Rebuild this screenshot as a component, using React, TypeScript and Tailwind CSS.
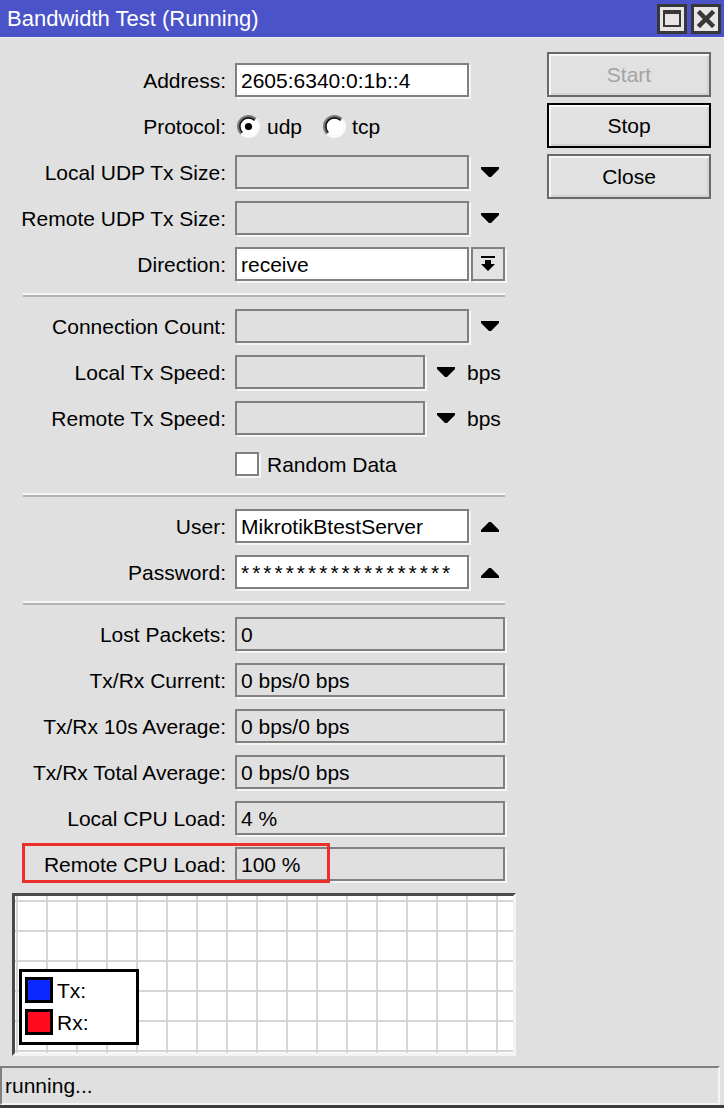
import React from "react";

function DropArrow({ up = false }: { up?: boolean }) {
  return (
    <svg width="18" height="11" viewBox="0 0 18 11" className={up ? "rotate-180" : ""}>
      <polygon points="0,0 18,0 18,2 10,10 8,10 0,2" fill="#000" />
    </svg>
  );
}

function Radio({ checked }: { checked?: boolean }) {
  return (
    <svg width="23" height="23" viewBox="0 0 23 23">
      <circle cx="11.5" cy="11.5" r="10" fill="#fff" />
      <path d="M 4.4 18.6 A 10 10 0 0 1 18.6 4.4" stroke="#7a7a7a" strokeWidth="3" fill="none" />
      <path d="M 5.4 17.6 A 8.6 8.6 0 0 1 17.6 5.4" stroke="#111" strokeWidth="1.6" fill="none" />
      <path d="M 18.6 4.4 A 10 10 0 0 1 4.4 18.6" stroke="#fafafa" strokeWidth="3" fill="none" />
      {checked && <circle cx="11.5" cy="11.5" r="3.6" fill="#000" />}
    </svg>
  );
}

function Label({ text, children }: { text: string; children?: React.ReactNode }) {
  return (
    <div className="relative h-[34px] flex items-center justify-end whitespace-nowrap">
      {text}
      {children}
    </div>
  );
}

function Box({ value = "", className = "" }: { value?: string; className?: string }) {
  return (
    <div
      className={`h-[34px] shrink-0 border-2 border-[#808080] shadow-[2px_2px_0_#f6f6f6] flex items-center pl-[4px] whitespace-nowrap overflow-hidden ${className}`}
    >
      {value}
    </div>
  );
}

function Separator() {
  return <div className="col-span-2 ml-[23px] h-[4px] border-t-2 border-[#f4f4f4] bg-[#b4b4b4]" />;
}

function WinButton({ text, active, disabled }: { text: string; active?: boolean; disabled?: boolean }) {
  return (
    <button
      className={`w-[164px] h-[45px] border-2 bg-[#e1e1e1] shadow-[inset_2px_2px_0_#f7f7f7,inset_-2px_-2px_0_#d2d2d2] flex items-center justify-center ${
        active ? "border-black" : "border-[#6a6a6a]"
      } ${disabled ? "text-[#a3a3a3]" : "text-black"}`}
    >
      {text}
    </button>
  );
}

export default function App() {
  return (
    <div className="w-[724px] h-[1108px] bg-[#e0e0e0] border-b-[3px] border-[#3c3c3c] flex flex-col overflow-hidden font-['Liberation_Sans',Arial,sans-serif] text-[21px] leading-none text-black">
      {/* title bar */}
      <div className="h-[38px] shrink-0 bg-[#4b53c9] border-b border-[#ececec] flex items-center justify-between pl-[7px] pr-[3px]">
        <span className="text-[22px] text-white">Bandwidth Test (Running)</span>
        <div className="flex gap-[4px]">
          <div className="w-[30px] h-[30px] border-[3px] border-[#383838] bg-[#e7e5e7] flex items-center justify-center">
            <div className="w-[18px] h-[17px] border-x-2 border-b-2 border-t-4 border-[#383838]" />
          </div>
          <div className="w-[30px] h-[30px] border-[3px] border-[#383838] bg-[#e7e5e7] flex items-center justify-center">
            <svg width="18" height="18" viewBox="0 0 18 18">
              <path d="M3 3 L15 15 M15 3 L3 15" stroke="#383838" strokeWidth="4.5" strokeLinecap="square" />
            </svg>
          </div>
        </div>
      </div>

      <div className="flex shrink-0">
        {/* form */}
        <div className="pt-[25px] grid grid-cols-[226px_270px] gap-x-[9px] gap-y-[12px]">
          <Label text="Address:" />
          <Box value="2605:6340:0:1b::4" className="w-[234px] bg-white" />

          <Label text="Protocol:" />
          <div className="h-[34px] flex items-center pl-[2px]">
            <Radio checked />
            <span className="ml-[7px]">udp</span>
            <span className="ml-[21px] flex">
              <Radio />
            </span>
            <span className="ml-[6px]">tcp</span>
          </div>

          <Label text="Local UDP Tx Size:" />
          <div className="flex items-center gap-[12px]">
            <Box className="w-[234px]" />
            <DropArrow />
          </div>

          <Label text="Remote UDP Tx Size:" />
          <div className="flex items-center gap-[12px]">
            <Box className="w-[234px]" />
            <DropArrow />
          </div>

          <Label text="Direction:" />
          <div className="flex items-center gap-[2px]">
            <Box value="receive" className="w-[234px] bg-white" />
            <div className="w-[34px] h-[34px] border-2 border-[#808080] bg-[#e3e3e3] shadow-[2px_2px_0_#f6f6f6] flex items-center justify-center">
              <svg width="14" height="17" viewBox="0 0 14 17">
                <rect x="0" y="0" width="14" height="2" fill="#000" />
                <polygon points="4,4 10,4 10,8 14,8 7,15 0,8 4,8" fill="#000" />
              </svg>
            </div>
          </div>

          <Separator />

          <Label text="Connection Count:" />
          <div className="flex items-center gap-[12px]">
            <Box className="w-[234px]" />
            <DropArrow />
          </div>

          <Label text="Local Tx Speed:" />
          <div className="flex items-center gap-[12px]">
            <Box className="w-[190px]" />
            <DropArrow />
            <span>bps</span>
          </div>

          <Label text="Remote Tx Speed:" />
          <div className="flex items-center gap-[12px]">
            <Box className="w-[190px]" />
            <DropArrow />
            <span>bps</span>
          </div>

          <div />
          <div className="h-[34px] flex items-center gap-[8px]">
            <div className="w-[24px] h-[24px] border-2 border-[#808080] bg-white shadow-[2px_2px_0_#f6f6f6]" />
            <span>Random Data</span>
          </div>

          <Separator />

          <Label text="User:" />
          <div className="flex items-center gap-[12px]">
            <Box value="MikrotikBtestServer" className="w-[234px] bg-white" />
            <DropArrow up />
          </div>

          <Label text="Password:" />
          <div className="flex items-center gap-[12px]">
            <Box value="*******************" className="w-[234px] bg-white tracking-[3px]" />
            <DropArrow up />
          </div>

          <Separator />

          <Label text="Lost Packets:" />
          <Box value="0" className="w-[270px]" />

          <Label text="Tx/Rx Current:" />
          <Box value="0 bps/0 bps" className="w-[270px]" />

          <Label text="Tx/Rx 10s Average:" />
          <Box value="0 bps/0 bps" className="w-[270px]" />

          <Label text="Tx/Rx Total Average:" />
          <Box value="0 bps/0 bps" className="w-[270px]" />

          <Label text="Local CPU Load:" />
          <Box value="4 %" className="w-[270px]" />

          <Label text="Remote CPU Load:">
            <div className="absolute left-[22px] -top-[4px] w-[308px] h-[40px] border-[3px] border-[#ee2d2d]" />
          </Label>
          <Box value="100 %" className="w-[270px]" />
        </div>

        {/* buttons */}
        <div className="ml-[42px] pt-[14px] flex flex-col gap-[6px]">
          <WinButton text="Start" disabled />
          <WinButton text="Stop" active />
          <WinButton text="Close" />
        </div>
      </div>

      {/* graph */}
      <div className="relative mt-[12px] ml-[12px] w-[504px] h-[163px] shrink-0 border-[3px] border-t-[#4a4a4a] border-l-[#4a4a4a] border-r-[#f4f4f4] border-b-[#f4f4f4] bg-white [background-image:linear-gradient(to_right,#d6d6d6_2px,transparent_2px),linear-gradient(to_bottom,#d6d6d6_2px,transparent_2px)] [background-size:30px_30px] [background-position:1px_4px]">
        <div className="absolute left-[4px] top-[73px] w-[120px] h-[76px] border-[3px] border-black bg-white pl-[3px] pt-[5px] flex flex-col gap-[6px]">
          <div className="flex items-center gap-[4px]">
            <div className="w-[28px] h-[26px] border-[3px] border-black bg-[#0a28ff]" />
            <span>Tx:</span>
          </div>
          <div className="flex items-center gap-[4px]">
            <div className="w-[28px] h-[26px] border-[3px] border-black bg-[#ff0a1e]" />
            <span>Rx:</span>
          </div>
        </div>
      </div>

      {/* status bar */}
      <div className="mt-[10px] mr-[4px] flex-1 border-2 border-t-[#808080] border-l-[#808080] border-r-[#f4f4f4] border-b-[#f4f4f4] flex items-center pl-[3px]">
        running...
      </div>
    </div>
  );
}
